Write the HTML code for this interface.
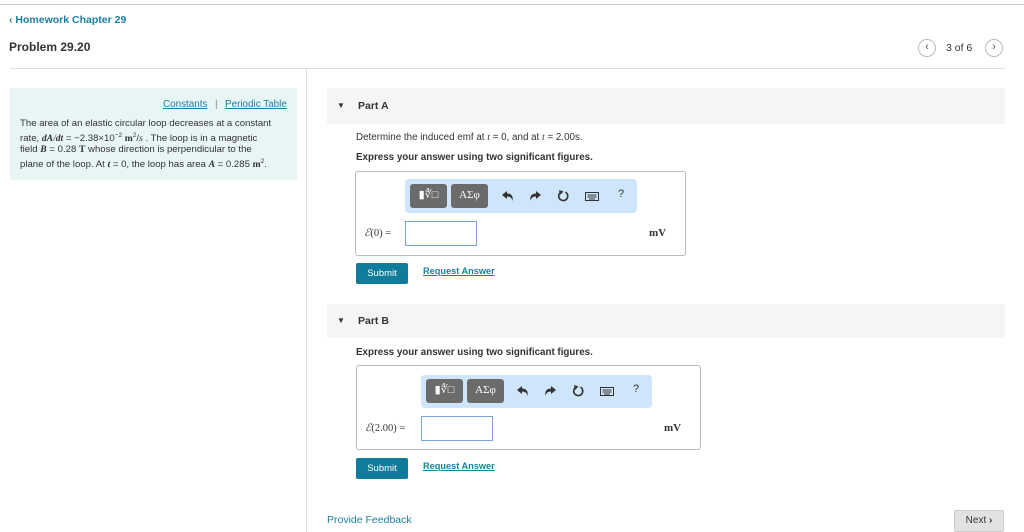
<!DOCTYPE html>
<html><head><meta charset="utf-8"><style>
*{margin:0;padding:0;box-sizing:border-box}
body{width:1024px;height:532px;overflow:hidden;background:#fff;font-family:"Liberation Sans",sans-serif;color:#333;position:relative}
.a{position:absolute;white-space:nowrap}
.link{color:#1a7fa0}
.sub{background:#0e7c9a;color:#fff;font-size:9.5px;text-align:center;line-height:21px;border-radius:2px}
.req{color:#1a7fa0;font-size:9.2px;font-weight:bold;text-decoration:underline}
.box{border:1px solid #bbb;border-radius:3px;background:#fff}
.tb{background:#cfe5fa;border-radius:4px}
.btn{background:#6b6b6b;border-radius:3px;color:#fff;font-family:"Liberation Serif",serif;font-size:11px;text-align:center;line-height:22px}
.inp{border:1px solid #7aa3e0;background:#fff}
.ic{font-size:12px;color:#333;text-align:center}
.serif{font-family:"Liberation Serif",serif}
</style></head><body>
<svg width="0" height="0" style="position:absolute">
<defs>
<g id="undo"><path d="M5 1 L0 5 L5 9 L5 6.5 C8 6.5 10 8 10.5 11 C11.5 6 9 3.5 5 3.5 Z" fill="#333"/></g>
<g id="redo"><path d="M7 1 L12 5 L7 9 L7 6.5 C4 6.5 2 8 1.5 11 C0.5 6 3 3.5 7 3.5 Z" fill="#333"/></g>
<g id="ref"><path d="M8.5 3.2 A4.5 4.5 0 1 1 3.5 3.5" fill="none" stroke="#333" stroke-width="1.6"/><path d="M2 1 L6.5 2.5 L3 6 Z" fill="#333"/></g>
<g id="kbd"><rect x="0.5" y="0.5" width="13" height="8" fill="none" stroke="#333" stroke-width="1"/><path d="M2.5 3h9M2.5 5h9M4 7h6" stroke="#333" stroke-width="0.9"/></g>
</defs></svg>
<div class="a" style="left:0;top:4px;width:1024px;height:1px;background:#ccc"></div>
<div class="a link" style="left:9px;top:14px;font-size:10.5px;font-weight:bold">‹ Homework Chapter 29</div>
<div class="a" style="left:9px;top:40px;font-size:12px;font-weight:bold;color:#333">Problem 29.20</div>
<div class="a" style="left:918px;top:39px;width:18px;height:18px;border:1px solid #bbb;border-radius:50%;font-size:11px;text-align:center;line-height:15px;color:#555">‹</div>
<div class="a" style="left:946px;top:42px;font-size:10.5px;color:#333">3 of 6</div>
<div class="a" style="left:985px;top:39px;width:18px;height:18px;border:1px solid #bbb;border-radius:50%;font-size:11px;text-align:center;line-height:15px;color:#555">›</div>
<div class="a" style="left:10px;top:68px;width:995px;height:1px;background:#ddd"></div>
<div class="a" style="left:306px;top:69px;width:1px;height:463px;background:#d8dfe8"></div>

<div class="a" style="left:10px;top:88px;width:287px;height:92px;background:#e8f5f5"></div>
<div class="a link" style="left:163px;top:99px;font-size:9.9px;text-decoration:underline">Constants</div>
<div class="a" style="left:215px;top:99px;font-size:9.9px;color:#888">|</div>
<div class="a link" style="left:225px;top:99px;font-size:9.9px;text-decoration:underline">Periodic Table</div>
<div class="a" style="left:20px;top:118px;font-size:9.6px;line-height:11.5px;color:#333">The area of an elastic circular loop decreases at a constant<br>rate, <i class="serif"><b>dA</b>/<b>dt</b></i> = −2.38×10<sup style="font-size:6.5px">−2</sup> <b class="serif">m</b><sup style="font-size:6.5px">2</sup>/<i class="serif">s</i> . The loop is in a magnetic<br>field <i class="serif"><b>B</b></i> = 0.28 <b class="serif">T</b> whose direction is perpendicular to the<br>plane of the loop. At <i class="serif"><b>t</b></i> = 0, the loop has area <i class="serif"><b>A</b></i> = 0.285 <b class="serif">m</b><sup style="font-size:6.5px">2</sup>.</div>

<!-- Part A -->
<div class="a" style="left:327px;top:88px;width:678px;height:36px;background:#f5f5f5"></div>
<div class="a" style="left:337px;top:101px;font-size:8px">▼</div>
<div class="a" style="left:358px;top:100px;font-size:10.5px;font-weight:bold">Part A</div>
<div class="a" style="left:356px;top:132px;font-size:9.8px">Determine the induced emf at <i class="serif">t</i> = 0, and at <i class="serif">t</i> = 2.00s.</div>
<div class="a" style="left:356px;top:152px;font-size:9.8px;font-weight:bold">Express your answer using two significant figures.</div>
<div class="a box" style="left:355px;top:171px;width:331px;height:85px"></div>
<div class="a tb" style="left:405px;top:179px;width:232px;height:34px"></div>
<div class="a btn" style="left:410px;top:184px;width:37px;height:24px">▮∜□</div>
<div class="a btn" style="left:451px;top:184px;width:37px;height:24px">ΑΣφ</div>
<svg class="a" style="left:502px;top:190px" width="13" height="12"><use href="#undo"/></svg>
<svg class="a" style="left:529px;top:190px" width="13" height="12"><use href="#redo"/></svg>
<svg class="a" style="left:557px;top:189px" width="13" height="13"><use href="#ref"/></svg>
<svg class="a" style="left:585px;top:192px" width="15" height="10"><use href="#kbd"/></svg>
<div class="a ic" style="left:614px;top:188px;width:14px;font-size:11px">?</div>
<div class="a serif" style="left:364px;top:227px;font-size:10.5px"><i>ℰ</i>(0) =</div>
<div class="a inp" style="left:405px;top:221px;width:72px;height:25px"></div>
<div class="a serif" style="left:649px;top:227px;font-size:11px;font-weight:bold">mV</div>
<div class="a sub" style="left:356px;top:263px;width:52px;height:21px">Submit</div>
<div class="a req" style="left:423px;top:266px">Request Answer</div>

<!-- Part B -->
<div class="a" style="left:327px;top:304px;width:678px;height:34px;background:#f5f5f5"></div>
<div class="a" style="left:337px;top:316px;font-size:8px">▼</div>
<div class="a" style="left:358px;top:315px;font-size:10.5px;font-weight:bold">Part B</div>
<div class="a" style="left:356px;top:347px;font-size:9.8px;font-weight:bold">Express your answer using two significant figures.</div>
<div class="a box" style="left:356px;top:365px;width:345px;height:85px"></div>
<div class="a tb" style="left:421px;top:375px;width:231px;height:33px"></div>
<div class="a btn" style="left:426px;top:379px;width:37px;height:24px">▮∜□</div>
<div class="a btn" style="left:467px;top:379px;width:37px;height:24px">ΑΣφ</div>
<svg class="a" style="left:517px;top:385px" width="13" height="12"><use href="#undo"/></svg>
<svg class="a" style="left:544px;top:385px" width="13" height="12"><use href="#redo"/></svg>
<svg class="a" style="left:572px;top:384px" width="13" height="13"><use href="#ref"/></svg>
<svg class="a" style="left:600px;top:387px" width="15" height="10"><use href="#kbd"/></svg>
<div class="a ic" style="left:629px;top:383px;width:14px;font-size:11px">?</div>
<div class="a serif" style="left:365px;top:422px;font-size:10.5px"><i>ℰ</i>(2.00) =</div>
<div class="a inp" style="left:421px;top:416px;width:72px;height:25px"></div>
<div class="a serif" style="left:664px;top:422px;font-size:11px;font-weight:bold">mV</div>
<div class="a sub" style="left:356px;top:458px;width:52px;height:21px">Submit</div>
<div class="a req" style="left:423px;top:461px">Request Answer</div>

<div class="a link" style="left:327px;top:514px;font-size:10.5px">Provide Feedback</div>
<div class="a" style="left:954px;top:510px;width:50px;height:22px;background:#e2e2e2;border:1px solid #ccc;border-radius:2px;font-size:10px;text-align:center;line-height:20px;color:#333">Next <b>›</b></div>
</body></html>
